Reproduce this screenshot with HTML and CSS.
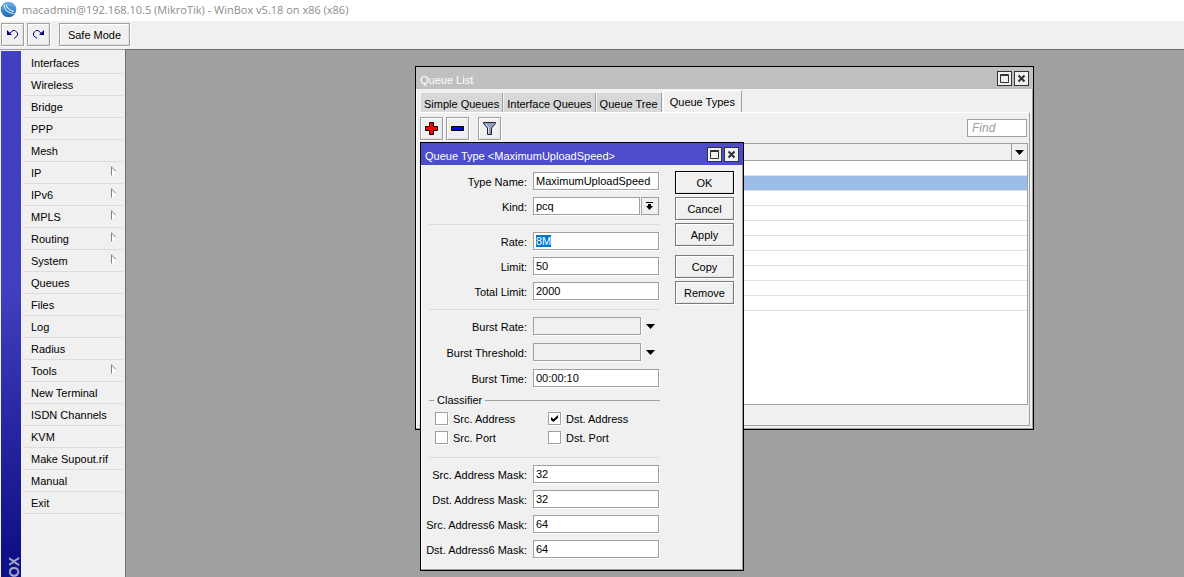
FILE: index.html
```html
<!DOCTYPE html>
<html lang="en">
<head>
    <meta charset="UTF-8">
    <meta name="viewport" content="width=device-width, initial-scale=1.0">
    <title>WinBox v5.18</title>
    <link rel="stylesheet" href="styles.css">
</head>
<body>
    <header class="app-title">
        <svg width="17" height="17" viewBox="0 0 17 17">
            <defs>
                <linearGradient id="ball" x1="0" y1="0" x2="0" y2="1">
                    <stop offset="0" stop-color="#6fb4ea"/>
                    <stop offset="1" stop-color="#1769b5"/>
                </linearGradient>
            </defs>
            <circle cx="8.5" cy="8.5" r="7.8" fill="url(#ball)"/>
            <path d="M4 4C4.500 9 8 12 13.500 12.500M6 3.500C7 7 9.500 9.800 14 10.500" fill="none" stroke="#fff" stroke-width="1"/>
        </svg>
        <span>macadmin@192.168.10.5 (MikroTik) - WinBox v5.18 on x86 (x86)</span>
    </header>

    <div class="app-toolbar">
        <button class="btn btn-icon" aria-label="Undo">
            <svg width="11" height="9" viewBox="0 0 11 9">
                <path d="M0 0L5 5H0z" fill="#000080"/>
                <path d="M3 3L6 .5H8L10.500 3V5.500L7 8.500" fill="none" stroke="#000080"/>
            </svg>
        </button>
        <button class="btn btn-icon" aria-label="Redo">
            <svg width="11" height="9" viewBox="0 0 11 9">
                <path d="M11 0L6 5H11z" fill="#000080"/>
                <path d="M8 3L5 .5H3L.5 3V5.500L4 8.500" fill="none" stroke="#000080"/>
            </svg>
        </button>
        <button class="btn btn-safe">Safe Mode</button>
    </div>

    <main class="app-main">
        <div class="rail"><span>OX</span></div>
        <nav class="menu">
            <a href="#">Interfaces</a>
            <a href="#">Wireless</a>
            <a href="#">Bridge</a>
            <a href="#">PPP</a>
            <a href="#">Mesh</a>
            <a href="#" class="has-sub">IP</a>
            <a href="#" class="has-sub">IPv6</a>
            <a href="#" class="has-sub">MPLS</a>
            <a href="#" class="has-sub">Routing</a>
            <a href="#" class="has-sub">System</a>
            <a href="#">Queues</a>
            <a href="#">Files</a>
            <a href="#">Log</a>
            <a href="#">Radius</a>
            <a href="#" class="has-sub">Tools</a>
            <a href="#">New Terminal</a>
            <a href="#">ISDN Channels</a>
            <a href="#">KVM</a>
            <a href="#">Make Supout.rif</a>
            <a href="#">Manual</a>
            <a href="#">Exit</a>
        </nav>

        <div class="desktop">
            <!-- Queue List -->
            <section class="window queue-list">
                <div class="window-title">
                    <span>Queue List</span>
                    <button class="win-btn" aria-label="Maximize"><svg width="9" height="9"><path d="M.5 .5h8v8h-8zM0 1.500h9" fill="none" stroke="#333"/></svg></button>
                    <button class="win-btn" aria-label="Close"><svg width="9" height="9"><path d="M1.500 1.500l6 6M7.500 1.500l-6 6" stroke="#333" stroke-width="2"/></svg></button>
                </div>
                <div class="tabs">
                    <button class="tab">Simple Queues</button>
                    <button class="tab">Interface Queues</button>
                    <button class="tab">Queue Tree</button>
                    <button class="tab active">Queue Types</button>
                </div>
                <div class="panel">
                    <div class="panel-toolbar">
                        <button class="btn btn-icon" aria-label="Add">
                            <svg width="13" height="13"><path d="M4.500 .5h4v4h4v4h-4v4h-4v-4h-4v-4h4z" fill="#f00" stroke="#000"/></svg>
                        </button>
                        <button class="btn btn-icon" aria-label="Remove">
                            <svg width="13" height="13"><path d="M.5 4.500h12v4h-12z" fill="#00f" stroke="#000"/></svg>
                        </button>
                        <button class="btn btn-icon btn-filter" aria-label="Filter">
                            <svg width="13" height="13"><path d="M.5 .5h12v1l-4 4.500v6.500h-4v-6.500l-4-4.500z" fill="#8f9fc4" stroke="#222"/><path d="M3 2l2.500 3.500v6" fill="none" stroke="#dfe6f4"/></svg>
                        </button>
                        <input class="find" type="text" placeholder="Find" aria-label="Find">
                    </div>
                    <div class="grid">
                        <table>
                            <thead>
                                <tr>
                                    <th></th>
                                    <th class="col-menu"><button aria-label="Columns"><svg width="9" height="5"><path d="M0 0h9L4.500 5z"/></svg></button></th>
                                </tr>
                            </thead>
                            <tbody>
                                <tr><td colspan="2"></td></tr>
                                <tr class="selected"><td colspan="2"></td></tr>
                                <tr><td colspan="2"></td></tr>
                                <tr><td colspan="2"></td></tr>
                                <tr><td colspan="2"></td></tr>
                                <tr><td colspan="2"></td></tr>
                                <tr><td colspan="2"></td></tr>
                                <tr><td colspan="2"></td></tr>
                                <tr><td colspan="2"></td></tr>
                                <tr><td colspan="2"></td></tr>
                            </tbody>
                        </table>
                    </div>
                </div>
            </section>

            <!-- Queue Type -->
            <section class="window queue-type">
                <div class="window-title">
                    <span>Queue Type &lt;MaximumUploadSpeed&gt;</span>
                    <button class="win-btn" aria-label="Maximize"><svg width="9" height="9"><path d="M.5 .5h8v8h-8zM0 1.500h9" fill="none" stroke="#333"/></svg></button>
                    <button class="win-btn" aria-label="Close"><svg width="9" height="9"><path d="M1.500 1.500l6 6M7.500 1.500l-6 6" stroke="#333" stroke-width="2"/></svg></button>
                </div>
                <form class="dialog">
                    <div class="fields">
                        <div class="group">
                            <div class="row">
                                <label for="name">Type Name:</label>
                                <input id="name" type="text" value="MaximumUploadSpeed">
                            </div>
                            <div class="row">
                                <label for="kind">Kind:</label>
                                <select id="kind"><option>pcq</option></select>
                                <button class="drop" type="button" aria-label="Choose kind">
                                    <svg width="7" height="8"><path d="M0 0h7v1H0zM2 2h3v2h2L3.500 8 0 4h2z"/></svg>
                                </button>
                            </div>
                        </div>
                        <hr>
                        <div class="group">
                            <div class="row">
                                <label for="rate">Rate:</label>
                                <input id="rate" type="text" value="8M">
                            </div>
                            <div class="row">
                                <label for="limit">Limit:</label>
                                <input id="limit" type="text" value="50">
                            </div>
                            <div class="row">
                                <label for="total">Total Limit:</label>
                                <input id="total" type="text" value="2000">
                            </div>
                        </div>
                        <hr>
                        <div class="group burst">
                            <div class="row">
                                <label for="burst-rate">Burst Rate:</label>
                                <input id="burst-rate" class="unset" type="text">
                                <button class="expand" type="button" aria-label="Set burst rate"><svg width="9" height="5"><path d="M0 0h9L4.500 5z"/></svg></button>
                            </div>
                            <div class="row">
                                <label for="burst-threshold">Burst Threshold:</label>
                                <input id="burst-threshold" class="unset" type="text">
                                <button class="expand" type="button" aria-label="Set burst threshold"><svg width="9" height="5"><path d="M0 0h9L4.500 5z"/></svg></button>
                            </div>
                            <div class="row">
                                <label for="burst-time">Burst Time:</label>
                                <input id="burst-time" type="text" value="00:00:10">
                            </div>
                        </div>
                        <fieldset>
                            <legend>Classifier</legend>
                            <div class="checks">
                                <label><input type="checkbox">Src. Address</label>
                                <label><input type="checkbox" checked>Dst. Address</label>
                                <label><input type="checkbox">Src. Port</label>
                                <label><input type="checkbox">Dst. Port</label>
                            </div>
                        </fieldset>
                        <hr>
                        <div class="group">
                            <div class="row">
                                <label for="src-mask">Src. Address Mask:</label>
                                <input id="src-mask" type="text" value="32">
                            </div>
                            <div class="row">
                                <label for="dst-mask">Dst. Address Mask:</label>
                                <input id="dst-mask" type="text" value="32">
                            </div>
                            <div class="row">
                                <label for="src6-mask">Src. Address6 Mask:</label>
                                <input id="src6-mask" type="text" value="64">
                            </div>
                            <div class="row">
                                <label for="dst6-mask">Dst. Address6 Mask:</label>
                                <input id="dst6-mask" type="text" value="64">
                            </div>
                        </div>
                    </div>
                    <div class="actions">
                        <button class="btn btn-default" type="button">OK</button>
                        <button class="btn" type="button">Cancel</button>
                        <button class="btn" type="button">Apply</button>
                        <button class="btn btn-copy" type="button">Copy</button>
                        <button class="btn" type="button">Remove</button>
                    </div>
                </form>
            </section>
        </div>
    </main>

    <script>
        // Rate is the field being edited
        const rate = document.getElementById('rate');
        rate.focus();
        rate.select();
    </script>
</body>
</html>
```
FILE: styles.css
```css
* {
    box-sizing: border-box;
}
body {
    margin: 0;
    height: 100vh;
    display: flex;
    flex-direction: column;
    overflow: hidden;
    background: #f0f0f0;
    color: #000;
    font: 11px/14px "Liberation Sans", Arial, sans-serif;
}
button, input, select {
    font: inherit;
    color: inherit;
    margin: 0;
    padding: 0;
    border-radius: 0;
    outline: none;
}
button {
    display: flex;
    align-items: center;
    justify-content: center;
}
svg {
    display: block;
    flex: none;
}

/* top bars */
.app-title {
    display: flex;
    align-items: center;
    gap: 5px;
    height: 21px;
    flex: none;
    padding-bottom: 2px;
    background: #fff;
    color: #8c8c8c;
    font: 11px/18px "Open Sans", "Noto Sans", sans-serif;
}
.app-toolbar {
    display: flex;
    gap: 3px;
    height: 28px;
    flex: none;
    padding: 2px 1px;
}
.btn {
    height: 23px;
    border: 1px solid #7a7a7a;
    background: #f0f0f0;
    box-shadow: inset 1px 1px #fff, inset -1px -1px #e2e2e2, 1px 1px #fff;
}
.btn-icon {
    width: 23px;
    border-color: #a0a0a0;
}
.btn-safe {
    width: 71px;
    margin-left: 6px;
    border-color: #a0a0a0;
}

/* left menu */
.app-main {
    display: flex;
    flex: 1;
    min-height: 0;
    border-top: 1px solid #a0a0a0;
}
.rail {
    display: flex;
    align-items: flex-end;
    justify-content: flex-end;
    width: 20px;
    margin: 1px 0 0 1px;
    overflow: hidden;
    background: linear-gradient(#4040c0 0%, #4040c0 45%, #101088 95%, #101088 100%);
}
.rail span {
    writing-mode: vertical-rl;
    transform: rotate(180deg);
    color: #a8a8c8;
    font-size: 14px;
    font-weight: bold;
}
.menu {
    width: 104px;
    padding: 2px 2px 0;
}
.menu a {
    position: relative;
    display: block;
    height: 22px;
    padding: 4px 8px 3px;
    border-bottom: 1px solid #dcdcdc;
    color: #000;
    text-decoration: none;
}
.has-sub::before,
.has-sub::after {
    content: "";
    position: absolute;
    top: 4px;
    right: 7px;
    width: 5px;
    height: 10px;
    background: #808080;
    clip-path: polygon(0 0, 100% 50%, 0 100%);
}
.has-sub::after {
    top: 6px;
    width: 4px;
    height: 8px;
    background: #fff;
}

/* workspace */
.desktop {
    position: relative;
    flex: 1;
    margin-top: -1px;
    border: solid #707070;
    border-width: 1px 0 0 1px;
    background: #a0a0a0;
    overflow: hidden;
}
.window {
    position: absolute;
    display: flex;
    flex-direction: column;
    border: 1px solid #000;
    background: #f0f0f0;
    box-shadow: inset -1px -1px #a0a0a0, inset 1px 1px #fff;
}
.window-title {
    display: flex;
    align-items: center;
    gap: 2px;
    height: 22px;
    flex: none;
    padding: 1px 4px 0;
    background: #c0c0c0;
    color: #fff;
}
.window-title span {
    flex: 1;
    padding-top: 2px;
}
.win-btn {
    width: 15px;
    height: 15px;
    border: 1px solid #333;
    background: #f0f0f0;
}

/* queue list */
.queue-list {
    left: 289px;
    top: 16px;
    width: 619px;
    height: 364px;
}
.tabs {
    display: flex;
    align-items: flex-end;
    gap: 1px;
    height: 23px;
    padding-left: 5px;
}
.tab {
    height: 19px;
    padding: 2px 3px 0;
    border: 0;
    border-right: 1px solid #a0a0a0;
    background: #d8d8d8;
    white-space: nowrap;
}
.tab.active {
    height: 22px;
    padding: 0 6px;
    border-top: 1px solid #fff;
    border-left: 1px solid #fff;
    background: #f0f0f0;
}
.panel {
    display: flex;
    flex-direction: column;
    flex: 1;
    margin: 0 3px 3px;
    padding: 4px 1px 0;
    border: 1px solid #a0a0a0;
    border-top-color: #fff;
    border-left: 0;
}
.panel-toolbar {
    display: flex;
    align-items: flex-start;
    gap: 3px;
    height: 26px;
}
.btn-filter {
    margin-left: 6px;
}
.find {
    width: 60px;
    height: 18px;
    margin: 2px 1px 0 auto;
    padding: 0 4px;
    border: 1px solid #a0a0a0;
    background: #fff;
}
.find::placeholder {
    color: #a0a0a0;
    font-size: 12px;
    font-style: italic;
}
.grid {
    height: 262px;
    border: 1px solid #a0a0a0;
    background: #fff;
}
.grid table {
    width: 100%;
    border-collapse: separate;
    border-spacing: 0;
    table-layout: fixed;
}
.grid th {
    height: 17px;
    padding: 0;
    border-bottom: 1px solid #a0a0a0;
    background: #f0f0f0;
}
.grid .col-menu {
    width: 16px;
    border-left: 1px solid #a0a0a0;
}
.col-menu button {
    width: 100%;
    height: 16px;
    border: 0;
    background: none;
}
.grid td {
    height: 15px;
    padding: 0;
    border-bottom: 1px solid #e2e2e2;
}
.selected td {
    background: #9cbde8;
}

/* queue type */
.queue-type {
    left: 294px;
    top: 92px;
    width: 324px;
}
.queue-type .window-title {
    background: #4d4dcc;
}
.dialog {
    display: flex;
    justify-content: space-between;
    padding: 6px 9px 12px 8px;
}
.fields {
    width: 231px;
    padding-top: 1px;
}
.group {
    display: flex;
    flex-direction: column;
    gap: 7px;
}
.burst {
    gap: 8px;
}
.row {
    display: flex;
    height: 18px;
}
.row label {
    display: flex;
    justify-content: flex-end;
    width: 98px;
    margin-right: 6px;
    line-height: 20px;
    white-space: nowrap;
}
.row input,
.row select {
    flex: 1;
    min-width: 0;
    height: 18px;
    margin-right: 1px;
    padding: 0 2px;
    border: 1px solid #a0a0a0;
    background: #fff;
    box-shadow: 1px 1px #fff;
    appearance: none;
}
.row .unset {
    background: #f0f0f0;
}
.row input::selection {
    background: #0078d7;
    color: #fff;
}
.drop {
    width: 18px;
    height: 18px;
    padding-right: 1px;
    margin-right: 1px;
    border: 1px solid #a0a0a0;
    background: #f0f0f0;
}
.expand {
    width: 18px;
    height: 18px;
    padding-right: 1px;
    border: 0;
    background: none;
}
hr {
    height: 1px;
    margin: 9px 1px 7px 0;
    border: 0;
    background: #dcdcdc;
}
fieldset {
    min-width: 0;
    margin: 6px 0 0;
    padding: 5px 0 4px;
    border: 0;
    border-top: 1px solid #a0a0a0;
}
legend {
    margin-left: 5px;
    padding: 0 3px;
}
.checks {
    display: grid;
    grid-template-columns: 113px 1fr;
    gap: 6px 0;
    padding-left: 6px;
}
.checks label {
    display: flex;
    align-items: center;
    gap: 5px;
    height: 13px;
}
.checks input {
    width: 13px;
    height: 13px;
    border: 1px solid #a0a0a0;
    background: #fff;
    box-shadow: 1px 1px #fff;
    appearance: none;
}
.checks input:checked::before {
    content: "";
    display: block;
    width: 7px;
    height: 7px;
    margin: 2px;
    background: #000;
    clip-path: polygon(0 30%, 35% 60%, 100% 0, 100% 40%, 35% 100%, 0 70%);
}
.actions {
    display: flex;
    flex-direction: column;
    gap: 3px;
    width: 59px;
}
.btn-default {
    border-color: #000;
}
.btn-copy {
    margin-top: 6px;
}
```
